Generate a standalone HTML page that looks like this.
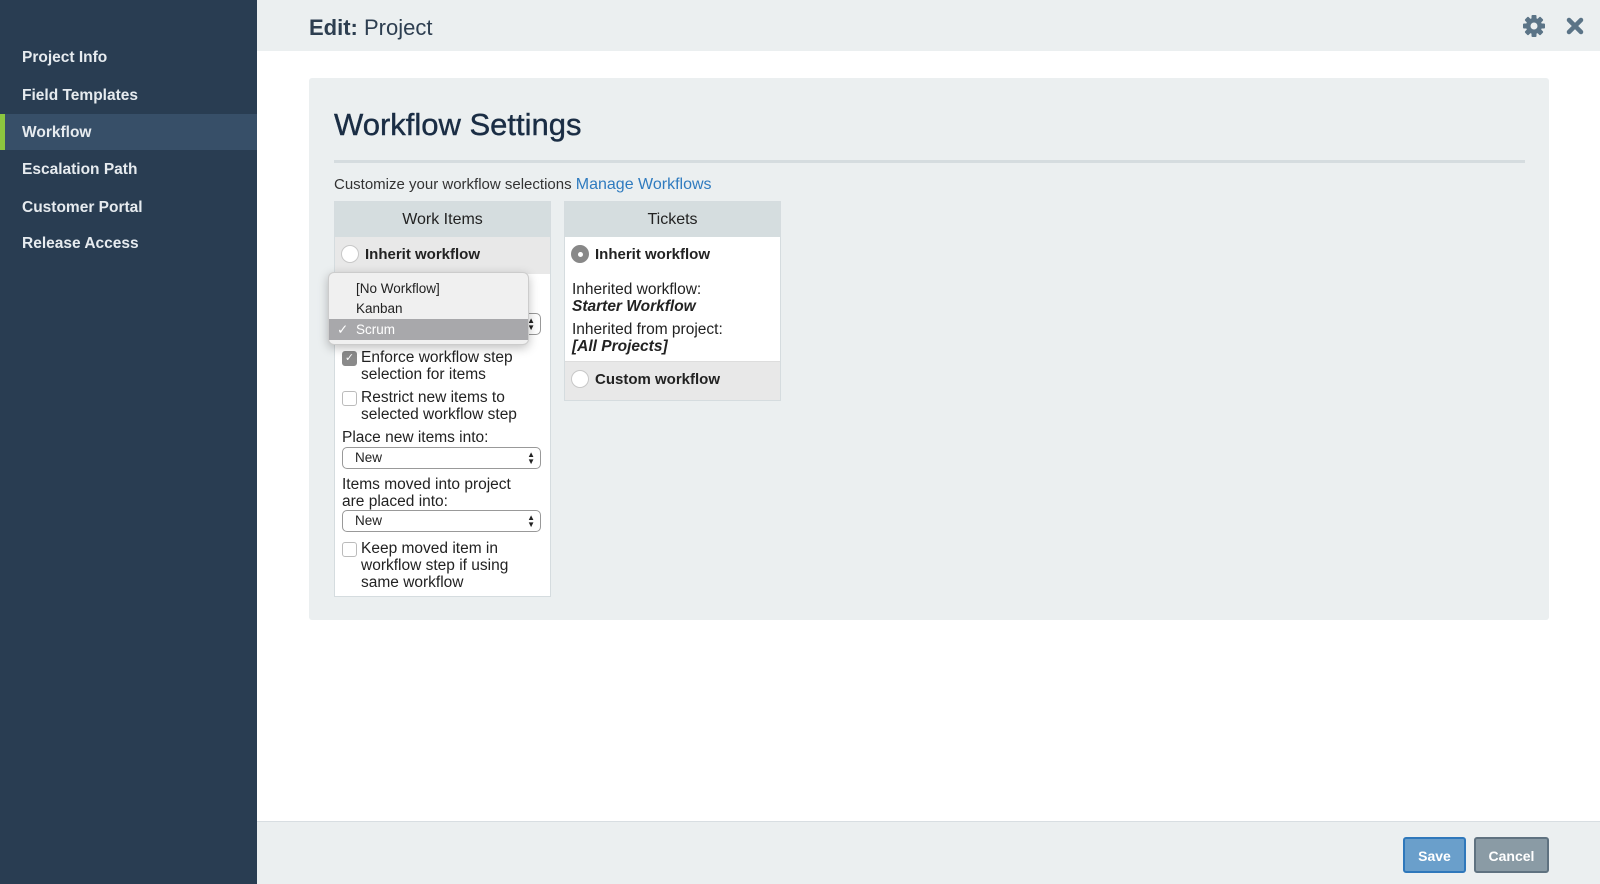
<!DOCTYPE html>
<html><head><meta charset="utf-8"><style>
*{box-sizing:border-box;margin:0;padding:0}
body{width:1600px;height:884px;position:relative;overflow:hidden;font-family:"Liberation Sans",sans-serif;background:#fff;color:#222}
.side{position:absolute;left:0;top:0;width:257px;height:884px;background:#293d52}
.nav{position:absolute;left:22px;color:#e6ebef;font-size:15.5px;font-weight:bold;line-height:20px}
.active{position:absolute;left:0;top:114px;width:257px;height:36px;background:#374f68;border-left:5px solid #8cc63f}
.hdr{position:absolute;left:257px;top:0;right:0;height:51px;background:#ebeff0}
.hdr .t{position:absolute;left:52px;top:15px;font-size:22px;color:#2d3e50}
.panel{position:absolute;left:309px;top:78px;width:1240px;height:542px;background:#ebeff0;border-radius:3px}
.title{position:absolute;left:25px;top:29px;font-size:31px;color:#1a2d44;-webkit-text-stroke:0.4px #1a2d44}
.rule{position:absolute;left:25px;top:82px;width:1191px;height:3px;background:#d5dcdf}
.cust{position:absolute;left:25px;top:98px;font-size:15px;color:#333}
.cust a{color:#2f7bbf;text-decoration:none;font-size:16px}
.col{position:absolute;background:#fff;border:1px solid #d5dcdf}
.ch{height:35px;background:#d5dddf;text-align:center;font-size:16px;line-height:35px;color:#222}
.row{height:37px;background:#e8e8e8;font-size:15px;line-height:35px;padding-left:30px;position:relative;font-weight:bold;color:#222}
.radio{position:absolute;left:6px;top:8px;width:18px;height:18px;border-radius:50%;background:#fff;border:1px solid #c8c8c8}
.t15{position:absolute;font-size:15.5px;line-height:17px;color:#222}
.cb{position:absolute;width:15px;height:15px;border:1px solid #bbb;border-radius:3px;background:#fff}
.sel{position:absolute;left:7px;width:199px;height:22px;border:1px solid #999;border-radius:5px;background:#fff;font-size:13.5px;line-height:20px;padding-left:12px;color:#222}
.arr{position:absolute;right:5px;top:3px;font-size:8px;line-height:7px;color:#222}
.btn{position:absolute;top:837px;height:36px;border-radius:3px;color:#fff;font-size:14px;font-weight:bold;text-align:center;line-height:34px}
</style></head><body>
<div class="side">
<div class="active"></div>
<div class="nav" style="top:48px">Project Info</div>
<div class="nav" style="top:86px">Field Templates</div>
<div class="nav" style="top:123px">Workflow</div>
<div class="nav" style="top:160px">Escalation Path</div>
<div class="nav" style="top:198px">Customer Portal</div>
<div class="nav" style="top:234px">Release Access</div>
</div>
<div class="hdr"><div class="t"><b>Edit:</b> Project</div>
<svg style="position:absolute;left:1265px;top:14px" width="24" height="24" viewBox="0 0 24 24"><g fill="#5b7487"><circle cx="12" cy="12" r="8"/><rect x="9.5" y="1" width="5" height="22" rx="1"/><rect x="9.5" y="1" width="5" height="22" rx="1" transform="rotate(45 12 12)"/><rect x="9.5" y="1" width="5" height="22" rx="1" transform="rotate(90 12 12)"/><rect x="9.5" y="1" width="5" height="22" rx="1" transform="rotate(135 12 12)"/></g><circle cx="12" cy="12" r="3.5" fill="#ebeff0"/></svg>
<svg style="position:absolute;left:1309px;top:17px" width="18" height="18" viewBox="0 0 18 18"><path d="M3 3L15 15M15 3L3 15" stroke="#5b7487" stroke-width="4.5" stroke-linecap="round"/></svg>
</div>
<div class="panel">
<div class="title">Workflow Settings</div>
<div class="rule"></div>
<div class="cust">Customize your workflow selections <a>Manage Workflows</a></div>
</div>
<div class="col" style="left:334px;top:201px;width:217px;height:396px">
<div class="ch">Work Items</div>
<div class="row"><div class="radio"></div>Inherit workflow</div>
<div class="sel" style="top:111px;left:7px">Scrum<div class="arr">▲<br>▼</div></div>
<div class="cb" style="left:7px;top:149px;background:#8a8a8a;border-color:#8a8a8a;color:#fff;font-size:11px;line-height:13px;text-align:center">✓</div>
<div class="t15" style="left:26px;top:147px">Enforce workflow step<br>selection for items</div>
<div class="cb" style="left:7px;top:189px"></div>
<div class="t15" style="left:26px;top:187px">Restrict new items to<br>selected workflow step</div>
<div class="t15" style="left:7px;top:227px">Place new items into:</div>
<div class="sel" style="top:245px">New<div class="arr">▲<br>▼</div></div>
<div class="t15" style="left:7px;top:274px">Items moved into project<br>are placed into:</div>
<div class="sel" style="top:308px">New<div class="arr">▲<br>▼</div></div>
<div class="cb" style="left:7px;top:340px"></div>
<div class="t15" style="left:26px;top:338px">Keep moved item in<br>workflow step if using<br>same workflow</div>
</div>
<div class="col" style="left:564px;top:201px;width:217px;height:200px">
<div class="ch">Tickets</div>
<div class="row" style="background:#fff"><div class="radio" style="background:#888;border-color:#888"><div style="position:absolute;left:6px;top:6px;width:5px;height:5px;border-radius:50%;background:#fff"></div></div>Inherit workflow</div>
<div class="t15" style="left:7px;top:79px">Inherited workflow:<br><b><i>Starter Workflow</i></b></div>
<div class="t15" style="left:7px;top:119px">Inherited from project:<br><b><i>[All Projects]</i></b></div>
<div class="row" style="position:absolute;left:0;top:159px;width:215px;height:39px;border-top:1px solid #ddd"><div class="radio"></div>Custom workflow</div>
</div>
<div style="position:absolute;left:328px;top:272px;width:201px;height:73px;background:#f0f0f0;border:1px solid #ccc;border-radius:6px;box-shadow:0 3px 10px rgba(0,0,0,.25);font-size:13.5px;color:#222">
<div style="position:absolute;left:27px;top:8px">[No Workflow]</div>
<div style="position:absolute;left:27px;top:28px">Kanban</div>
<div style="position:absolute;left:0;top:46px;width:199px;height:21px;background:#a8a8ab;color:#fff;line-height:21px;padding-left:27px">Scrum<span style="position:absolute;left:8px">✓</span></div>
</div>
<div style="position:absolute;left:257px;top:821px;right:0;height:63px;background:#ebeff0;border-top:1px solid #d8dee2"></div>
<div class="btn" style="left:1403px;width:63px;background:#6a9fcb;border:2px solid #2f78bb">Save</div>
<div class="btn" style="left:1474px;width:75px;background:#8a9ba5;border:2px solid #5f7280">Cancel</div>
</body></html>
